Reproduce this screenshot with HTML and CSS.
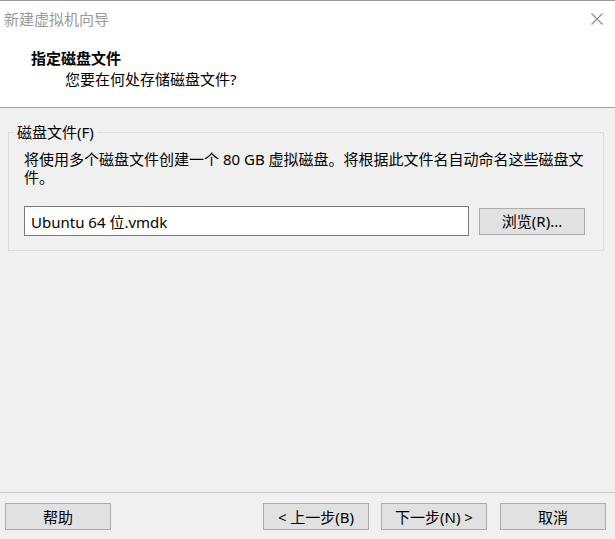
FILE: index.html
```html
<!DOCTYPE html>
<html lang="zh-CN">
<head>
    <meta charset="UTF-8">
    <title>新建虚拟机向导</title>
    <link rel="stylesheet" href="styles.css">
</head>
<body>
    <div class="window">
        <div class="titlebar">
            <span class="title">新建虚拟机向导</span>
            <svg class="close" width="12" height="12" viewBox="0 0 12 12">
                <path d="M0.5 0.5 L11.5 11.5 M11.5 0.5 L0.5 11.5" stroke="#8c8c8c" stroke-width="1.1" fill="none"/>
            </svg>
        </div>

        <div class="header">
            <div class="header-title">指定磁盘文件</div>
            <div class="header-sub">您要在何处存储磁盘文件?</div>
        </div>

        <div class="content">
            <fieldset class="group">
                <legend>磁盘文件(F)</legend>
                <p class="desc">将使用多个磁盘文件创建一个 80 GB 虚拟磁盘。将根据此文件名自动命名这些磁盘文件。</p>
                <div class="file-row">
                    <input type="text" class="file-input" value="Ubuntu 64 位.vmdk">
                    <button class="btn browse">浏览(R)...</button>
                </div>
            </fieldset>
        </div>

        <div class="footer">
            <button class="btn">帮助</button>
            <div class="nav">
                <button class="btn">&lt; 上一步(B)</button>
                <button class="btn">下一步(N) &gt;</button>
                <button class="btn cancel">取消</button>
            </div>
        </div>
    </div>
</body>
</html>
```

FILE: styles.css
```css
body {
    margin: 0;
    padding: 0;
    background: #f0f0f0;
    font-family: "Noto Sans", "Noto Sans CJK SC", sans-serif;
    font-size: 15px;
    color: #000;
}

.window {
    width: 615px;
    height: 539px;
    display: flex;
    flex-direction: column;
    border-top: 1px solid #9a9a9a;
    box-sizing: border-box;
}

.titlebar {
    height: 36px;
    background: #fff;
    display: flex;
    align-items: center;
    justify-content: space-between;
    padding: 0 12px 0 4px;
}

.title {
    color: #9a9a9a;
    line-height: 18px;
}

.header {
    background: #fff;
    height: 71px;
    padding: 11px 0 0 31px;
    box-sizing: border-box;
    border-bottom: 1px solid #a0a0a0;
}

.header-title {
    font-weight: bold;
    line-height: 20px;
}

.header-sub {
    margin-left: 34px;
    line-height: 20px;
    margin-top: 1px;
}

.content {
    flex: 1;
    padding: 15px 11px 0 8px;
}

.group {
    margin: 0;
    padding: 2px 18px 14px 15px;
    border: 1px solid #dcdcdc;
    min-width: 0;
}

.group legend {
    margin-left: -10px;
    padding: 0 3px 0 3px;
    line-height: 18px;
}

.desc {
    margin: 7px 0 0 0;
    line-height: 18px;
}

.file-row {
    display: flex;
    align-items: center;
    margin-top: 20px;
    gap: 10px;
}

.file-input {
    flex: 1;
    height: 30px;
    box-sizing: border-box;
    border: 1px solid #7a7a7a;
    padding: 0 6px;
    font-family: inherit;
    font-size: 15px;
    background: #fff;
    outline: none;
}

.btn {
    width: 106px;
    height: 27px;
    background: #e1e1e1;
    border: 1px solid #adadad;
    font-family: inherit;
    font-size: 15px;
    color: #000;
    padding: 0;
    line-height: 18px;
}

.footer {
    height: 47px;
    box-sizing: border-box;
    border-top: 1px solid #c8c8c8;
    display: flex;
    justify-content: space-between;
    align-items: flex-start;
    padding: 10px 9px 0 5px;
}

.nav {
    display: flex;
    gap: 12px;
}

.cancel {
    margin-left: 1px;
}
```
